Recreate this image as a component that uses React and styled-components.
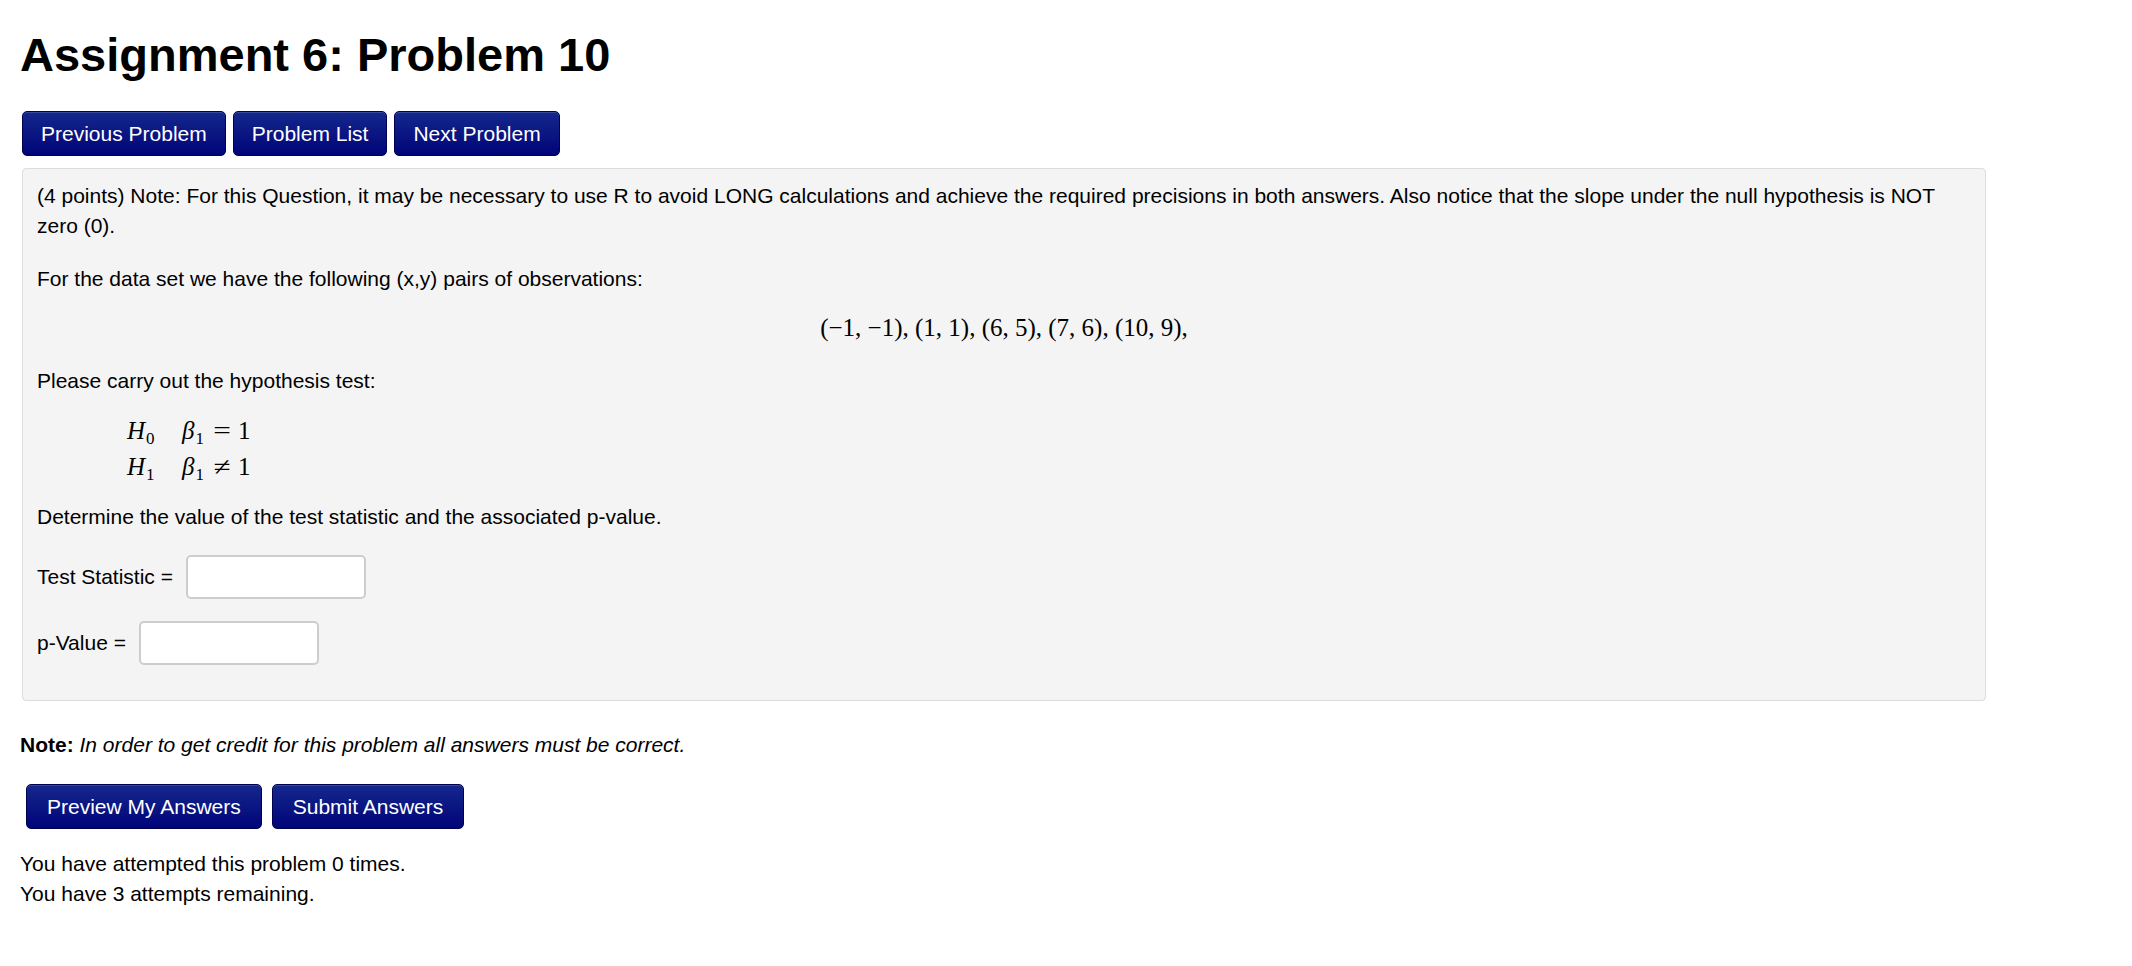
import React from 'react';
import styled, { createGlobalStyle } from 'styled-components';

const GlobalStyle = createGlobalStyle`
  body {
    margin: 0;
    background: #fff;
    color: #000;
    font-family: "Liberation Sans", Helvetica, Arial, sans-serif;
    font-size: 21px;
    line-height: 30px;
  }
`;

const Page = styled.div`
  padding: 23px 0 60px 20px;
`;

const Title = styled.h1`
  margin: 0;
  font-size: 47px;
  line-height: 64px;
  font-weight: bold;
`;

const ButtonRow = styled.div`
  display: flex;
  gap: ${(p) => p.gap || 7}px;
  margin: ${(p) => p.margin};
`;

const NavButton = styled.button`
  height: 45px;
  padding: 0 ${(p) => p.pad || 18}px;
  font-family: inherit;
  font-size: 21px;
  color: #fff;
  background: linear-gradient(#15288c, #000479);
  border: 1px solid #000250;
  border-radius: 5px;
  box-shadow: inset 0 1px 0 rgba(255, 255, 255, 0.15);
  cursor: pointer;
`;

const ProblemBox = styled.div`
  margin: 12px 0 0 2px;
  width: 1964px;
  box-sizing: border-box;
  background: #f4f4f4;
  border: 1px solid #dcdcdc;
  border-radius: 4px;
  padding: 12px 14px 35px 14px;
`;

const Para = styled.p`
  margin: ${(p) => p.top || 0}px 0 0 0;
`;

const Display = styled.div`
  margin: 14px 0 18px 0;
  text-align: center;
  font-family: "Liberation Serif", "Times New Roman", serif;
  font-size: 25px;
  line-height: 40px;
`;

const HypoTable = styled.div`
  display: grid;
  grid-template-columns: 55px auto;
  margin: 17px 0 0 90px;
  font-family: "Liberation Serif", "Times New Roman", serif;
  font-size: 25px;
  line-height: 36px;
  width: max-content;
`;

const Var = styled.i`
  font-style: italic;
`;

const Sub = styled.sub`
  font-size: 17px;
  line-height: 0;
  vertical-align: -5px;
  font-style: normal;
  margin-left: 1px;
`;

const Rel = styled.span`
  display: inline-block;
  width: 18px;
  text-align: center;
  margin: 0 7px 0 9px;
  transform: scaleX(1.25);
`;

const AnswerRow = styled.div`
  display: flex;
  align-items: center;
  gap: 13px;
  margin-top: ${(p) => p.top}px;
`;

const AnswerInput = styled.input`
  width: 180px;
  height: 44px;
  box-sizing: border-box;
  border: 2px solid #cdcdcd;
  border-radius: 5px;
  background: #fff;
  font-size: 21px;
  padding: 0 8px;
`;

const Note = styled.p`
  margin: 29px 0 0 0;
  em {
    font-style: italic;
  }
`;

const Status = styled.div`
  margin-top: 20px;
`;

function Hypo({ sub, rel }) {
  return (
    <>
      <span>
        <Var>H</Var>
        <Sub>{sub}</Sub>
      </span>
      <span>
        <Var>β</Var>
        <Sub>1</Sub>
        <Rel>{rel}</Rel>1
      </span>
    </>
  );
}

export default function App() {
  return (
    <>
      <GlobalStyle />
      <Page>
        <Title>Assignment 6: Problem 10</Title>
        <ButtonRow margin="24px 0 0 2px">
          <NavButton>Previous Problem</NavButton>
          <NavButton>Problem List</NavButton>
          <NavButton>Next Problem</NavButton>
        </ButtonRow>

        <ProblemBox>
          <Para>
            (4 points) Note: For this Question, it may be necessary to use R to avoid LONG
            calculations and achieve the required precisions in both answers. Also notice that
            the slope under the null hypothesis is NOT zero (0).
          </Para>
          <Para top={23}>For the data set we have the following (x,y) pairs of observations:</Para>
          <Display>(−1, −1), (1, 1), (6, 5), (7, 6), (10, 9),</Display>
          <Para>Please carry out the hypothesis test:</Para>
          <HypoTable>
            <Hypo sub="0" rel="=" />
            <Hypo sub="1" rel="≠" />
          </HypoTable>
          <Para top={17}>Determine the value of the test statistic and the associated p-value.</Para>
          <AnswerRow top={23}>
            <span>Test Statistic =</span>
            <AnswerInput type="text" />
          </AnswerRow>
          <AnswerRow top={22}>
            <span>p-Value =</span>
            <AnswerInput type="text" />
          </AnswerRow>
        </ProblemBox>

        <Note>
          <b>Note:</b> <em>In order to get credit for this problem all answers must be correct.</em>
        </Note>
        <ButtonRow gap={10} margin="24px 0 0 6px">
          <NavButton pad={20}>Preview My Answers</NavButton>
          <NavButton pad={20}>Submit Answers</NavButton>
        </ButtonRow>
        <Status>
          You have attempted this problem 0 times.
          <br />
          You have 3 attempts remaining.
        </Status>
      </Page>
    </>
  );
}
